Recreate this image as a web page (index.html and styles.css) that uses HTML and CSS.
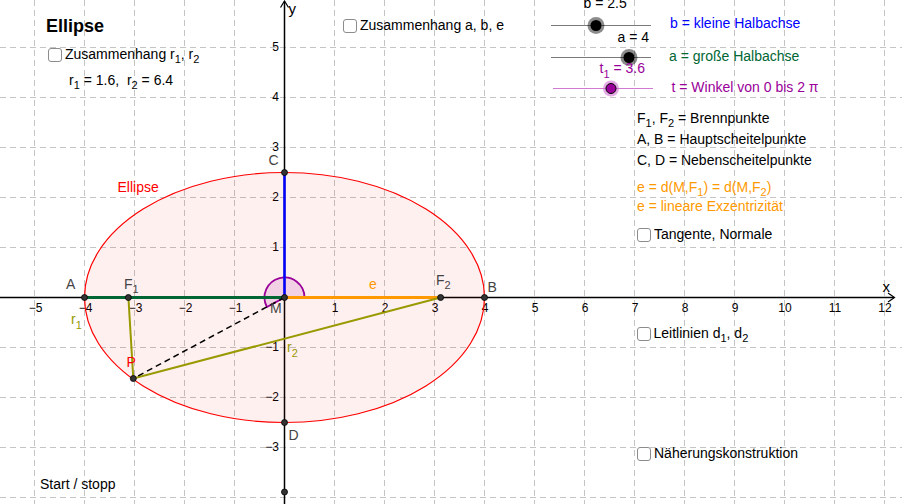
FILE: index.html
```html
<!DOCTYPE html>
<html lang="de">
<head>
<meta charset="utf-8">
<title>Ellipse</title>
<link rel="stylesheet" href="styles.css">
</head>
<body>
<div class="applet">
  <svg class="canvas" width="902" height="504" viewBox="0 0 902 504">
    <g class="grid">
      <line x1="34.5" y1="0" x2="34.5" y2="504"/>
      <line x1="84.5" y1="0" x2="84.5" y2="504"/>
      <line x1="134.5" y1="0" x2="134.5" y2="504"/>
      <line x1="184.5" y1="0" x2="184.5" y2="504"/>
      <line x1="234.5" y1="0" x2="234.5" y2="504"/>
      <line x1="334.5" y1="0" x2="334.5" y2="504"/>
      <line x1="384.5" y1="0" x2="384.5" y2="504"/>
      <line x1="434.5" y1="0" x2="434.5" y2="504"/>
      <line x1="484.5" y1="0" x2="484.5" y2="504"/>
      <line x1="534.5" y1="0" x2="534.5" y2="504"/>
      <line x1="584.5" y1="0" x2="584.5" y2="504"/>
      <line x1="634.5" y1="0" x2="634.5" y2="504"/>
      <line x1="684.5" y1="0" x2="684.5" y2="504"/>
      <line x1="734.5" y1="0" x2="734.5" y2="504"/>
      <line x1="784.5" y1="0" x2="784.5" y2="504"/>
      <line x1="834.5" y1="0" x2="834.5" y2="504"/>
      <line x1="884.5" y1="0" x2="884.5" y2="504"/>
      <line x1="0" y1="47.5" x2="902" y2="47.5"/>
      <line x1="0" y1="97.5" x2="902" y2="97.5"/>
      <line x1="0" y1="147.5" x2="902" y2="147.5"/>
      <line x1="0" y1="197.5" x2="902" y2="197.5"/>
      <line x1="0" y1="247.5" x2="902" y2="247.5"/>
      <line x1="0" y1="347.5" x2="902" y2="347.5"/>
      <line x1="0" y1="397.5" x2="902" y2="397.5"/>
      <line x1="0" y1="447.5" x2="902" y2="447.5"/>
      <line x1="0" y1="497.5" x2="902" y2="497.5"/>
    </g>

    <g class="axes">
      <line x1="0" y1="297.5" x2="894" y2="297.5"/>
      <polyline points="888,293 894.5,297.5 888,302"/>
      <line x1="284.5" y1="504" x2="284.5" y2="1.5"/>
      <polyline points="280.5,7.5 284.5,1 288.5,7.5"/>
    </g>

    <g class="nums">
      <text class="num" x="35.5" y="312">−5</text>
      <text class="num" x="85.5" y="312">−4</text>
      <text class="num" x="135.5" y="312">−3</text>
      <text class="num" x="185.5" y="312">−2</text>
      <text class="num" x="235.5" y="312">−1</text>
      <text class="num" x="335" y="312">1</text>
      <text class="num" x="385" y="312">2</text>
      <text class="num" x="435" y="312">3</text>
      <text class="num" x="485" y="312">4</text>
      <text class="num" x="535" y="312">5</text>
      <text class="num" x="585" y="312">6</text>
      <text class="num" x="635" y="312">7</text>
      <text class="num" x="685" y="312">8</text>
      <text class="num" x="735" y="312">9</text>
      <text class="num" x="785" y="312">10</text>
      <text class="num" x="835" y="312">11</text>
      <text class="num" x="885" y="312">12</text>
      <text class="numy" x="279" y="51">5</text>
      <text class="numy" x="279" y="101">4</text>
      <text class="numy" x="279" y="151">3</text>
      <text class="numy" x="279" y="201">2</text>
      <text class="numy" x="279" y="251">1</text>
      <text class="numy" x="279" y="351">−1</text>
      <text class="numy" x="279" y="401">−2</text>
      <text class="numy" x="279" y="451">−3</text>
      <text class="axlbl" x="288.5" y="14">y</text>
      <text class="axlbl" x="882.5" y="292">x</text>
    </g>

    <ellipse class="ell" cx="284.5" cy="297.5" rx="200" ry="125"/>
    <path class="sector" d="M284.5 297.5 L304.5 297.5 A20 20 0 1 0 266.9 307 Z"/>

    <line class="seg-a" x1="84.5" y1="297.5" x2="284.5" y2="297.5"/>
    <line class="seg-e" x1="284.5" y1="297.5" x2="440.6" y2="297.5"/>
    <line class="seg-b" x1="284.5" y1="297.5" x2="284.5" y2="172.5"/>
    <polyline class="seg-r" points="128.4,297.5 133.3,378.5 440.6,297.5"/>
    <line class="seg-mp" x1="284.5" y1="297.5" x2="133.3" y2="378.5"/>

    <circle class="pt" cx="84.5" cy="297.5" r="3"/>
    <circle class="pt" cx="128.4" cy="297.5" r="3"/>
    <circle class="pt" cx="284.5" cy="297.5" r="3"/>
    <circle class="pt" cx="440.6" cy="297.5" r="3"/>
    <circle class="pt" cx="484.5" cy="297.5" r="3"/>
    <circle class="pt" cx="284.5" cy="172.5" r="3"/>
    <circle class="pt" cx="284.5" cy="422.5" r="3"/>
    <circle class="pt" cx="133.3" cy="378.5" r="3"/>
    <circle class="pt" cx="284.5" cy="492" r="3"/>

    <text class="lbl" x="66" y="289">A</text>
    <text class="lbl" x="124" y="289">F<tspan class="tsub" dy="4">1</tspan></text>
    <text class="lbl" x="436" y="285">F<tspan class="tsub" dy="4">2</tspan></text>
    <text class="lbl" x="487.5" y="292">B</text>
    <text class="lbl" x="268.5" y="164.5">C</text>
    <text class="lbl" x="288.5" y="440">D</text>
    <text class="lbl" x="270" y="313">M</text>
    <text class="lbl lbl-e" x="369" y="289">e</text>
    <text class="lbl lbl-p" x="126.5" y="366.5">P</text>
    <text class="lbl lbl-r" x="71" y="324">r<tspan class="tsub" dy="5">1</tspan></text>
    <text class="lbl lbl-r" x="287" y="352">r<tspan class="tsub" dy="5">2</tspan></text>
    <text class="lbl lbl-ell" x="117.5" y="191.5">Ellipse</text>

    <line class="slider" x1="551" y1="25.5" x2="651" y2="25.5"/>
    <circle class="knob-halo" cx="596" cy="25.5" r="8.5"/>
    <circle class="knob" cx="596" cy="25.5" r="5.5"/>
    <text class="slbl" x="583.5" y="8">b = 2.5</text>

    <line class="slider" x1="551" y1="57.5" x2="651" y2="57.5"/>
    <circle class="knob-halo" cx="629" cy="57.5" r="8.5"/>
    <circle class="knob" cx="629" cy="57.5" r="5.5"/>
    <text class="slbl" x="617.5" y="41.5">a = 4</text>

    <line class="slider-t" x1="553" y1="88.5" x2="653" y2="88.5"/>
    <circle class="knob-halo-t" cx="611" cy="88.5" r="8"/>
    <circle class="knob-t" cx="611" cy="88.5" r="5"/>
    <text class="slbl slbl-t" x="599.5" y="73">t<tspan class="tsub" dy="5">1</tspan><tspan dy="-5"> = 3.6</tspan></text>
  </svg>

  <h1 class="title">Ellipse</h1>

  <label class="cb cb-r">
    <span class="box"></span>
    <span class="cb-text">Zusammenhang r<span class="sub">1</span>, r<span class="sub">2</span></span>
  </label>
  <div class="rvals">r<span class="sub">1</span> = 1.6,&nbsp; r<span class="sub">2</span> = 6.4</div>

  <label class="cb cb-abe">
    <span class="box"></span>
    <span class="cb-text">Zusammenhang a, b, e</span>
  </label>

  <div class="leg leg-b">b = kleine Halbachse</div>
  <div class="leg leg-a">a = große Halbachse</div>
  <div class="leg leg-t">t = Winkel von 0 bis 2 π</div>

  <div class="legend">
    <div class="legend-black">
      <div>F<span class="sub">1</span>, F<span class="sub">2</span> = Brennpunkte</div>
      <div>A, B = Hauptscheitelpunkte</div>
      <div>C, D = Nebenscheitelpunkte</div>
    </div>
    <div class="legend-orange">
      <div>e = d(M,F<span class="sub">1</span>) = d(M,F<span class="sub">2</span>)</div>
      <div>e = lineare Exzentrizität</div>
    </div>
  </div>

  <label class="cb cb-tan">
    <span class="box"></span>
    <span class="cb-text">Tangente, Normale</span>
  </label>
  <label class="cb cb-leit">
    <span class="box"></span>
    <span class="cb-text">Leitlinien d<span class="sub">1</span>, d<span class="sub">2</span></span>
  </label>
  <label class="cb cb-naeh">
    <span class="box"></span>
    <span class="cb-text">Näherungskonstruktion</span>
  </label>

  <div class="start">Start / stopp</div>
</div>
</body>
</html>
```

FILE: styles.css
```css
* { box-sizing: border-box; }
html, body { margin: 0; padding: 0; background: #fff; }
body {
  font-family: "Liberation Sans", Arial, sans-serif;
  font-size: 14px;
  color: #000;
}
.applet {
  position: relative;
  width: 902px;
  height: 504px;
  overflow: hidden;
  background: #fff;
}
.canvas { position: absolute; left: 0; top: 0; display: block; }
.canvas text { font-family: "Liberation Sans", Arial, sans-serif; }

.grid line { stroke: #c4c4c4; stroke-width: 1; stroke-dasharray: 6 4; }
.axes line { stroke: #000; stroke-width: 1.5; }
.axes polyline { fill: none; stroke: #000; stroke-width: 1.2; }

.num { font-size: 12px; fill: #000; text-anchor: middle; }
.numy { font-size: 12px; fill: #000; text-anchor: end; }
.axlbl { font-size: 15px; fill: #000; }

.ell { fill: rgba(255, 0, 0, 0.06); stroke: #ff0000; stroke-width: 1.2; }
.sector { fill: rgba(153, 0, 153, 0.13); stroke: #990099; stroke-width: 1.8; }
.seg-a { stroke: #006633; stroke-width: 3; }
.seg-e { stroke: #ff9900; stroke-width: 3; }
.seg-b { stroke: #0000ff; stroke-width: 2.5; }
.seg-r { fill: none; stroke: #999900; stroke-width: 2; }
.seg-mp { stroke: #000; stroke-width: 1.5; stroke-dasharray: 6 4; }
.pt { fill: #333; stroke: #000; stroke-width: 0.8; }

.lbl { font-size: 14px; fill: #444; }
.lbl-e { fill: #ff9900; }
.lbl-p { fill: #ff0000; }
.lbl-r { fill: #999900; }
.lbl-ell { fill: #ff0000; }
.tsub { font-size: 11px; }

.slider { stroke: #7a7a7a; stroke-width: 1; }
.slider-t { stroke: #d27ad2; stroke-width: 1; }
.knob-halo { fill: rgba(0, 0, 0, 0.45); }
.knob { fill: #000; }
.knob-halo-t { fill: rgba(204, 102, 204, 0.55); }
.knob-t { fill: #990099; stroke: #000; stroke-width: 1; }
.slbl { font-size: 14px; fill: #000; }
.slbl-t { fill: #990099; }

.sub { font-size: 11px; vertical-align: -4px; line-height: 0; }

.title {
  position: absolute;
  left: 46px;
  top: 15.5px;
  margin: 0;
  font-size: 18px;
  line-height: 20px;
  font-weight: bold;
}

.cb {
  position: absolute;
  display: flex;
  align-items: flex-start;
  gap: 3px;
  white-space: nowrap;
}
.box {
  display: block;
  width: 14px;
  height: 14px;
  border: 1.5px solid #8c8c8c;
  border-radius: 3px;
  background: #fff;
  flex: none;
}
.cb-text { line-height: 12px; }
.cb-r { left: 48px; top: 48px; }
.cb-abe { left: 343px; top: 19px; }
.cb-tan { left: 637px; top: 228px; }
.cb-leit { left: 636.5px; top: 327px; }
.cb-naeh { left: 637px; top: 447px; }

.rvals {
  position: absolute;
  left: 69px;
  top: 72px;
  line-height: 16px;
  white-space: nowrap;
}

.leg { position: absolute; line-height: 16px; white-space: nowrap; }
.leg-b { left: 670px; top: 14.5px; color: #0000ff; }
.leg-a { left: 669px; top: 47.5px; color: #006633; }
.leg-t { left: 671.5px; top: 78.5px; color: #990099; }

.legend {
  position: absolute;
  left: 637px;
  top: 108px;
  display: flex;
  flex-direction: column;
  gap: 6.5px;
  white-space: nowrap;
}
.legend-black { line-height: 21px; }
.legend-orange { line-height: 19.5px; color: #ff9900; }

.start {
  position: absolute;
  left: 40px;
  top: 476px;
  line-height: 16px;
}
```
